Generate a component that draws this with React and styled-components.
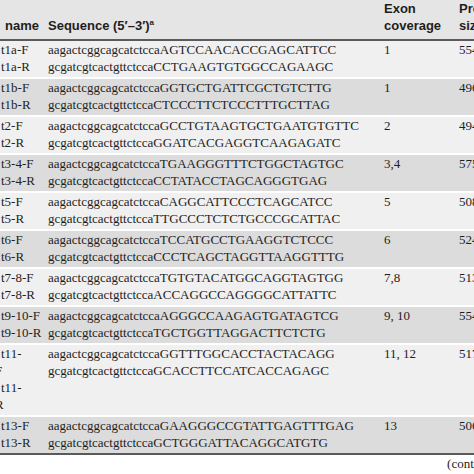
import React from 'react'
import styled, { createGlobalStyle } from 'styled-components'

const GlobalStyle = createGlobalStyle`
  html, body {
    margin: 0;
    padding: 0;
    background: #fff;
    overflow: hidden;
  }
`

const Viewport = styled.div`
  width: 474px;
  height: 474px;
  overflow: hidden;
`

const Sheet = styled.div`
  width: 512px;
  margin-left: -5px;
  color: #1e1e1e;
`

const Table = styled.table`
  width: 512px;
  border-collapse: collapse;
  table-layout: fixed;
`

const HeadRow = styled.tr`
  background: #e5e5e5;
`

const HeadCell = styled.th`
  font-family: "Liberation Sans", Arial, sans-serif;
  font-weight: bold;
  font-size: 13px;
  line-height: 17px;
  text-align: left;
  vertical-align: bottom;
  padding: 0 0 5px ${(p) => p.$indent || 0}px;
  border-bottom: 2px solid #5a5a5a;
  white-space: nowrap;
  overflow: hidden;

  sup {
    font-size: 8px;
    vertical-align: 5px;
    line-height: 0;
  }
`

const Row = styled.tr`
  background: ${(p) => (p.$dark ? '#dcdcdc' : '#f0f0f0')};
`

const Cell = styled.td`
  font-family: "Liberation Serif", "Times New Roman", serif;
  font-size: 13px;
  line-height: 17px;
  vertical-align: top;
  padding: 0 0 2px 0;
  border-bottom: 2px solid ${(p) => (p.$last ? '#5a5a5a' : '#fff')};
  white-space: nowrap;
  overflow: hidden;
`

const Name = styled.div`
  text-indent: 6px;
`

const Note = styled.div`
  font-family: "Liberation Serif", "Times New Roman", serif;
  font-size: 13px;
  line-height: 17px;
  text-align: right;
`

const primers = [
  {
    names: [['t1a-F'], ['t1a-R']],
    seqs: ['aagactcggcagcatctccaAGTCCAACACCGAGCATTCC', 'gcgatcgtcactgttctccaCCTGAAGTGTGGCCAGAAGC'],
    exon: '1',
    size: '554',
  },
  {
    names: [['t1b-F'], ['t1b-R']],
    seqs: ['aagactcggcagcatctccaGGTGCTGATTCGCTGTCTTG', 'gcgatcgtcactgttctccaCTCCCTTCTCCCTTTGCTTAG'],
    exon: '1',
    size: '496',
  },
  {
    names: [['t2-F'], ['t2-R']],
    seqs: ['aagactcggcagcatctccaGCCTGTAAGTGCTGAATGTGTTC', 'gcgatcgtcactgttctccaGGATCACGAGGTCAAGAGATC'],
    exon: '2',
    size: '494',
  },
  {
    names: [['t3-4-F'], ['t3-4-R']],
    seqs: ['aagactcggcagcatctccaTGAAGGGTTTCTGGCTAGTGC', 'gcgatcgtcactgttctccaCCTATACCTAGCAGGGTGAG'],
    exon: '3,4',
    size: '575',
  },
  {
    names: [['t5-F'], ['t5-R']],
    seqs: ['aagactcggcagcatctccaCAGGCATTCCCTCAGCATCC', 'gcgatcgtcactgttctccaTTGCCCTCTCTGCCCGCATTAC'],
    exon: '5',
    size: '508',
  },
  {
    names: [['t6-F'], ['t6-R']],
    seqs: ['aagactcggcagcatctccaTCCATGCCTGAAGGTCTCCC', 'gcgatcgtcactgttctccaCCCTCAGCTAGGTTAAGGTTTG'],
    exon: '6',
    size: '524',
  },
  {
    names: [['t7-8-F'], ['t7-8-R']],
    seqs: ['aagactcggcagcatctccaTGTGTACATGGCAGGTAGTGG', 'gcgatcgtcactgttctccaACCAGGCCAGGGGCATTATTC'],
    exon: '7,8',
    size: '513',
  },
  {
    names: [['t9-10-F'], ['t9-10-R']],
    seqs: ['aagactcggcagcatctccaAGGGCCAAGAGTGATAGTCG', 'gcgatcgtcactgttctccaTGCTGGTTAGGACTTCTCTG'],
    exon: '9, 10',
    size: '554',
  },
  {
    names: [['t11-', 'F'], ['t11-', 'R']],
    seqs: ['aagactcggcagcatctccaGGTTTGGCACCTACTACAGG', 'gcgatcgtcactgttctccaGCACCTTCCATCACCAGAGC'],
    exon: '11, 12',
    size: '517',
  },
  {
    names: [['t13-F'], ['t13-R']],
    seqs: ['aagactcggcagcatctccaGAAGGGCCGTATTGAGTTTGAG', 'gcgatcgtcactgttctccaGCTGGGATTACAGGCATGTG'],
    exon: '13',
    size: '506',
  },
]

export default function App() {
  return (
    <Viewport>
      <GlobalStyle />
      <Sheet>
        <Table>
          <colgroup>
            <col style={{ width: 53 }} />
            <col style={{ width: 336 }} />
            <col style={{ width: 75 }} />
            <col style={{ width: 48 }} />
          </colgroup>
          <thead>
            <HeadRow>
              <HeadCell $indent={10}>name</HeadCell>
              <HeadCell>
                Sequence (5′–3′)<sup>a</sup>
              </HeadCell>
              <HeadCell>
                Exon
                <br />
                coverage
              </HeadCell>
              <HeadCell>
                Product
                <br />
                size (bp)
              </HeadCell>
            </HeadRow>
          </thead>
          <tbody>
            {primers.map((p, i) => {
              const last = i === primers.length - 1
              return (
                <Row key={i} $dark={i % 2 === 1}>
                  <Cell $last={last}>
                    {p.names.map((lines, j) => (
                      <Name key={j}>
                        {lines.map((l, k) => (
                          <React.Fragment key={k}>
                            {k > 0 && <br />}
                            {l}
                          </React.Fragment>
                        ))}
                      </Name>
                    ))}
                  </Cell>
                  <Cell $last={last}>
                    {p.seqs.map((s) => (
                      <div key={s}>{s}</div>
                    ))}
                  </Cell>
                  <Cell $last={last}>{p.exon}</Cell>
                  <Cell $last={last}>{p.size}</Cell>
                </Row>
              )
            })}
          </tbody>
        </Table>
        <Note>(continued)</Note>
      </Sheet>
    </Viewport>
  )
}
